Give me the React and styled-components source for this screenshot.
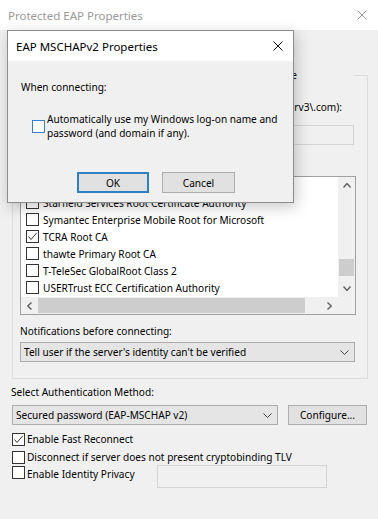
import React from 'react';
import styled, { createGlobalStyle } from 'styled-components';

const GlobalStyle = createGlobalStyle`
  html, body { margin: 0; padding: 0; }
  body {
    background: #f0f0f0;
    font-family: "Noto Sans", "Open Sans", sans-serif;
    font-size: 10.1px;
    color: #000;
  }
`;

const certs = [
  { name: 'Starfield Root Certificate Authority - G2' },
  { name: 'Starfield Services Root Certificate Authority' },
  { name: 'Symantec Enterprise Mobile Root for Microsoft' },
  { name: 'TCRA Root CA', checked: true },
  { name: 'thawte Primary Root CA' },
  { name: 'T-TeleSec GlobalRoot Class 2' },
  { name: 'USERTrust ECC Certification Authority' },
];

const CloseIcon = ({ color }) => (
  <svg width="10" height="10" viewBox="0 0 10 10">
    <path d="M0.5 0.5 L9.5 9.5 M9.5 0.5 L0.5 9.5" stroke={color} strokeWidth="1" fill="none" />
  </svg>
);

const Chevron = ({ dir = 'down', size = 'combo' }) => {
  const combo = size === 'combo';
  const w = combo ? 9 : 8;
  const h = 5;
  const paths = {
    down: `M0.5 0.5 L${w / 2} ${h - 0.5} L${w - 0.5} 0.5`,
    up: `M0.5 ${h - 0.5} L${w / 2} 0.5 L${w - 0.5} ${h - 0.5}`,
  };
  if (dir === 'left' || dir === 'right') {
    const d = dir === 'left' ? 'M4.5 0.5 L0.8 4 L4.5 7.5' : 'M0.5 0.5 L4.2 4 L0.5 7.5';
    return (
      <svg width="5" height="8" viewBox="0 0 5 8">
        <path d={d} stroke="#606060" strokeWidth="1.4" fill="none" />
      </svg>
    );
  }
  return (
    <svg width={w} height={h} viewBox={`0 0 ${w} ${h}`}>
      <path d={paths[dir]} stroke={combo ? '#444' : '#606060'} strokeWidth={combo ? 1 : 1.4} fill="none" />
    </svg>
  );
};

const CheckBox = ({ checked, accent }) => (
  <Box $accent={accent}>
    {checked && (
      <svg width="11" height="11" viewBox="0 0 11 11">
        <path d="M1.5 5.5 L4 8.5 L9.8 1.8" stroke="#333" strokeWidth="1" fill="none" />
      </svg>
    )}
  </Box>
);

const App = () => (
  <Window>
    <GlobalStyle />
    <TitleBar $inactive>
      <span>Protected EAP Properties</span>
      <CloseIcon color="#9a9a9a" />
    </TitleBar>

    <Group>
      <Legend>
        <CheckBox checked />
        <span>Verify the server's identity by validating the certificate</span>
      </Legend>
      <RightLabel>
        <CheckBox />
        <span>Connect to these servers (examples:srv1;srv2;.*\.srv3\.com):</span>
      </RightLabel>
      <TextBox $mt={10} $w={334} />
      <Label $mt={9}>Trusted Root Certification Authorities:</Label>
      <ListBox>
        <ListItems>
          {certs.map((c) => (
            <ListRow key={c.name}>
              <CheckBox checked={c.checked} />
              <span>{c.name}</span>
            </ListRow>
          ))}
        </ListItems>
        <VScroll>
          <ArrowCell><Chevron dir="up" size="scroll" /></ArrowCell>
          <VThumb />
          <Spacer />
          <ArrowCell><Chevron dir="down" size="scroll" /></ArrowCell>
        </VScroll>
        <HScroll>
          <ArrowCell><Chevron dir="left" /></ArrowCell>
          <HThumb />
          <Spacer />
          <ArrowCell><Chevron dir="right" /></ArrowCell>
        </HScroll>
        <Corner />
      </ListBox>
      <Label $mt={9}>Notifications before connecting:</Label>
      <Combo $mt={3} $w={335}>
        <span>Tell user if the server's identity can't be verified</span>
        <Chevron />
      </Combo>
    </Group>

    <Label $mt={6} $ml={11}>Select Authentication Method:</Label>
    <AuthRow>
      <Combo $w={266}>
        <span>Secured password (EAP-MSCHAP v2)</span>
        <Chevron />
      </Combo>
      <Button $w={79}>Configure...</Button>
    </AuthRow>

    <OptionRow $mt={8}>
      <CheckBox checked />
      <OptionText>Enable Fast Reconnect</OptionText>
    </OptionRow>
    <OptionRow $mt={5}>
      <CheckBox />
      <OptionText>Disconnect if server does not present cryptobinding TLV</OptionText>
    </OptionRow>
    <OptionRow $mt={1} $boxTop={1}>
      <CheckBox />
      <OptionText $w={128} $top={2}>Enable Identity Privacy</OptionText>
      <TextBox $w={170} $h={23} />
    </OptionRow>

    <Dialog>
      <TitleBar $inner>
        <span>EAP MSCHAPv2 Properties</span>
        <CloseIcon color="#111" />
      </TitleBar>
      <DialogBody>
        <Label>When connecting:</Label>
        <DialogCheck>
          <CheckBox accent />
          <span>
            Automatically use my Windows log-on name and
            <br />
            password (and domain if any).
          </span>
        </DialogCheck>
        <ButtonRow>
          <Button $w={72} $h={21} $primary>OK</Button>
          <Button $w={73} $h={21}>Cancel</Button>
        </ButtonRow>
      </DialogBody>
    </Dialog>
  </Window>
);

export default App;

const Window = styled.div`
  position: relative;
  width: 378px;
  height: 519px;
  overflow: hidden;
  background: #f0f0f0;
`;

const TitleBar = styled.div`
  height: 30px;
  background: #fff;
  display: flex;
  align-items: center;
  justify-content: space-between;
  padding: ${(p) => (p.$inner ? '0 10px 0 8px' : '0 11px 0 8px')};
  color: ${(p) => (p.$inactive ? '#999' : '#000')};
  font-size: 11.5px;
`;

const Box = styled.span`
  flex: none;
  box-sizing: border-box;
  width: 13px;
  height: 13px;
  border: 1px solid ${(p) => (p.$accent ? '#3183cc' : '#333')};
  background: #fff;
  display: flex;
  align-items: center;
  justify-content: center;
`;

const Group = styled.fieldset`
  box-sizing: border-box;
  width: 356px;
  min-width: 0;
  margin: 37px 0 0 12px;
  padding: 17px 11px 16px 7px;
  border: 1px solid #dcdcdc;
`;

const Legend = styled.legend`
  box-sizing: border-box;
  width: 328px;
  margin-left: 6px;
  padding: 0 57px 0 0;
  display: flex;
  justify-content: flex-end;
  align-items: center;
  gap: 3px;
  line-height: 16px;
  white-space: nowrap;
`;

const Label = styled.div`
  line-height: 15px;
  margin-top: ${(p) => p.$mt || 0}px;
  margin-left: ${(p) => p.$ml || 0}px;
  white-space: nowrap;
`;

const RightLabel = styled.div`
  display: flex;
  justify-content: flex-end;
  align-items: center;
  gap: 3px;
  padding-right: 14px;
  line-height: 15px;
  white-space: nowrap;
`;

const TextBox = styled.div`
  flex: none;
  box-sizing: border-box;
  width: ${(p) => p.$w}px;
  height: ${(p) => p.$h || 20}px;
  margin-top: ${(p) => p.$mt || 0}px;
  border: 1px solid #d4d4d4;
  background: #f0f0f0;
`;

const ListBox = styled.div`
  box-sizing: border-box;
  width: 336px;
  height: 139px;
  margin-top: 7px;
  border: 1px solid #a0a0a0;
  background: #fff;
  display: grid;
  grid-template-columns: 1fr 17px;
  grid-template-rows: 120px 17px;
`;

const ListItems = styled.div`
  overflow: hidden;
`;

const ListRow = styled.div`
  height: 17px;
  display: flex;
  align-items: center;
  gap: 4px;
  padding-left: 5px;
  white-space: nowrap;
`;

const VScroll = styled.div`
  background: #f0f0f0;
  display: flex;
  flex-direction: column;
`;

const HScroll = styled.div`
  background: #f0f0f0;
  display: flex;
`;

const ArrowCell = styled.div`
  flex: none;
  width: 17px;
  height: 17px;
  display: flex;
  align-items: center;
  justify-content: center;
`;

const VThumb = styled.div`
  height: 17px;
  margin: 65px 1px 0;
  background: #cdcdcd;
`;

const HThumb = styled.div`
  width: 267px;
  margin: 1px 0;
  background: #cdcdcd;
`;

const Spacer = styled.div`
  flex: 1;
`;

const Corner = styled.div`
  background: #f0f0f0;
`;

const Combo = styled.div`
  box-sizing: border-box;
  width: ${(p) => p.$w}px;
  height: 20px;
  margin-top: ${(p) => p.$mt || 0}px;
  padding: 0 5px 0 3px;
  border: 1px solid #adadad;
  background: #e5e5e5;
  display: flex;
  align-items: center;
  justify-content: space-between;
  white-space: nowrap;
`;

const AuthRow = styled.div`
  display: flex;
  gap: 10px;
  margin: 5px 0 0 12px;
`;

const Button = styled.div`
  box-sizing: border-box;
  width: ${(p) => p.$w}px;
  height: ${(p) => p.$h || 20}px;
  border: ${(p) => (p.$primary ? '2px solid #2f7fc4' : '1px solid #adadad')};
  background: #e1e1e1;
  display: flex;
  align-items: center;
  justify-content: center;
`;

const OptionRow = styled.div`
  display: flex;
  align-items: flex-start;
  gap: 2px;
  margin: ${(p) => p.$mt}px 0 0 12px;
  & > ${Box} {
    margin-top: ${(p) => p.$boxTop || 0}px;
  }
`;

const OptionText = styled.span`
  flex: none;
  width: ${(p) => (p.$w ? `${p.$w}px` : 'auto')};
  line-height: 14px;
  margin-top: ${(p) => (p.$top !== undefined ? p.$top : -1)}px;
  white-space: nowrap;
`;

const Dialog = styled.div`
  position: absolute;
  left: 7px;
  top: 30px;
  box-sizing: border-box;
  width: 287px;
  height: 173px;
  border: 1px solid #8c8c8c;
  background: #f0f0f0;
  box-shadow: 2px 4px 14px rgba(0, 0, 0, 0.22);
  display: flex;
  flex-direction: column;
`;

const DialogBody = styled.div`
  padding: 19px 0 0 13px;
`;

const DialogCheck = styled.div`
  display: flex;
  align-items: flex-start;
  gap: 2px;
  margin: 18px 0 0 11px;
  line-height: 13.5px;
  & > ${Box} {
    margin-top: 7px;
  }
`;

const ButtonRow = styled.div`
  display: flex;
  gap: 13px;
  margin: 32px 0 0 56px;
`;
